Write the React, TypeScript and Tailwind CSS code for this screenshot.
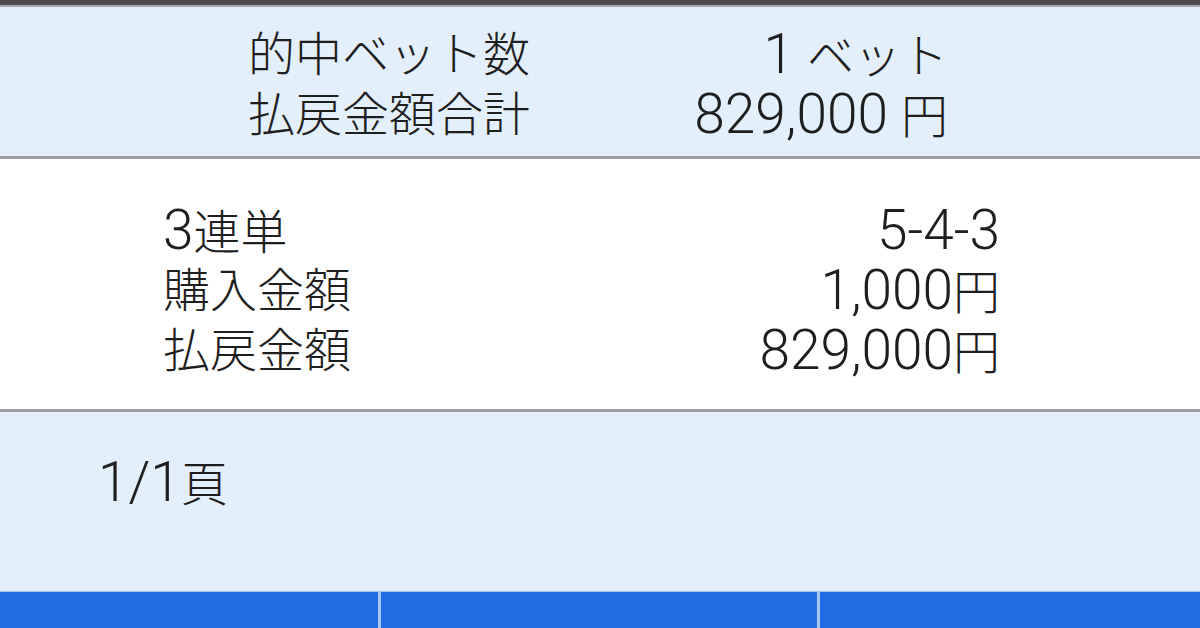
import React from 'react';

const font = { fontFamily: '"Liberation Sans", "Noto Sans CJK JP", sans-serif' };
const digitFont = { fontFamily: 'Roboto, "Liberation Sans", sans-serif' };

// digits in the original are rendered noticeably larger than the kana/kanji
const N: React.FC<{ children: React.ReactNode }> = ({ children }) => (
  <span className="text-[55px] font-light" style={digitFont}>
    {children}
  </span>
);

const Row: React.FC<{ label: React.ReactNode; value: React.ReactNode }> = ({ label, value }) => (
  <div className="flex h-[60px] items-center">
    <span className="whitespace-nowrap">{label}</span>
    <span className="flex-1 text-right whitespace-nowrap">{value}</span>
  </div>
);

export default function App() {
  return (
    <div
      className="flex h-[628px] w-[1200px] flex-col overflow-hidden bg-white text-[47px] leading-[60px] font-light text-[#1e1e1e]"
      style={font}
    >
      {/* top frame edge */}
      <div className="h-[5px] shrink-0 bg-[#4b4b4e]" />
      <div className="h-[2px] shrink-0 bg-[#a4a6ab]" />

      {/* summary */}
      <div className="flex h-[152px] shrink-0 flex-col bg-[#e3effb] pt-[18px] pl-[248px] pr-[252px] border-b-[3px] border-[#9c9ea4]">
        <Row label="的中ベット数" value={<><N>1</N> ベット</>} />
        <Row label="払戻金額合計" value={<><N>829,000</N> 円</>} />
      </div>

      {/* bet detail */}
      <div className="flex h-[253px] shrink-0 flex-col bg-white pt-[42px] pl-[163px] pr-[200px] border-b-[3px] border-[#9c9ea4]">
        <Row label={<><N>3</N>連単</>} value={<N>5-4-3</N>} />
        <Row label="購入金額" value={<><N>1,000</N>円</>} />
        <Row label="払戻金額" value={<><N>829,000</N>円</>} />
      </div>

      {/* pager */}
      <div className="flex flex-1 flex-col bg-[#e3effb] pt-[41px] pl-[98px]">
        <div className="flex h-[60px] items-center">
          <span className="whitespace-nowrap">
            <N>1/1</N>頁
          </span>
        </div>
      </div>

      {/* bottom buttons */}
      <div className="grid h-[37px] shrink-0 grid-cols-[381px_439px_1fr] bg-[#236ce1] border-t border-[#9fc2f0]">
        <div className="border-r-[3px] border-[#a9c9f2]" />
        <div className="border-r-[3px] border-[#a9c9f2]" />
        <div />
      </div>
    </div>
  );
}
